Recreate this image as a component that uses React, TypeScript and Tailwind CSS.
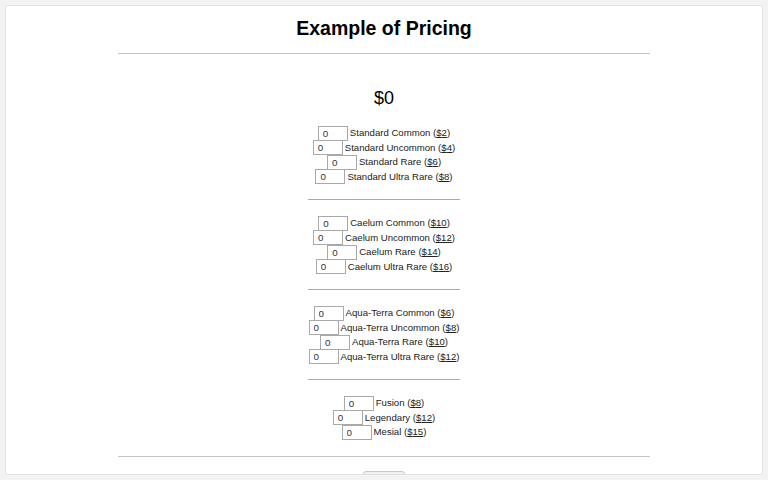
import React from "react";

type Item = { name: string; price: number };

const sections: Item[][] = [
  [
    { name: "Standard Common", price: 2 },
    { name: "Standard Uncommon", price: 4 },
    { name: "Standard Rare", price: 6 },
    { name: "Standard Ultra Rare", price: 8 },
  ],
  [
    { name: "Caelum Common", price: 10 },
    { name: "Caelum Uncommon", price: 12 },
    { name: "Caelum Rare", price: 14 },
    { name: "Caelum Ultra Rare", price: 16 },
  ],
  [
    { name: "Aqua-Terra Common", price: 6 },
    { name: "Aqua-Terra Uncommon", price: 8 },
    { name: "Aqua-Terra Rare", price: 10 },
    { name: "Aqua-Terra Ultra Rare", price: 12 },
  ],
  [
    { name: "Fusion", price: 8 },
    { name: "Legendary", price: 12 },
    { name: "Mesial", price: 15 },
  ],
];

function Row({ item }: { item: Item }) {
  return (
    <div className="flex h-[14.5px] items-center justify-center gap-[2px]">
      <input
        defaultValue="0"
        className="box-border h-[15px] w-[30px] border border-[#a9a9a9] bg-white px-[4px] py-0 text-[9.8px] leading-[13px] text-[#333] outline-none"
      />
      <span className="text-[9.6px] leading-none text-[#222]">
        {item.name} (<span className="underline">${item.price}</span>)
      </span>
    </div>
  );
}

export default function App() {
  return (
    <div
      className="h-[480px] w-[768px] bg-[#f3f3f3] pt-[5px] pl-[5px]"
      style={{ fontFamily: '"Liberation Sans", Arial, sans-serif' }}
    >
      <div className="box-border flex h-[470px] w-[758px] flex-col items-center overflow-hidden border border-[#e2e2e2] bg-white">
        <h1 className="mt-[10px] h-[24px] text-[19.5px] font-bold leading-[24px] text-black">
          Example of Pricing
        </h1>
        <div className="mt-[13px] h-px w-[532px] shrink-0 bg-[#c4c4c4]" />
        <div className="mt-[33px] h-[22px] text-[18px] leading-[22px] text-black">$0</div>
        <div className="mt-[17px] flex w-full flex-col items-center">
          {sections.map((sec, i) => (
            <div key={i} className="flex w-full flex-col items-center">
              {sec.map((it) => (
                <Row key={it.name} item={it} />
              ))}
              {i < sections.length - 1 && (
                <div className="mt-[15px] mb-[16px] h-px w-[152px] bg-[#aaaaaa]" />
              )}
            </div>
          ))}
        </div>
        <div className="mt-[16px] h-px w-[532px] shrink-0 bg-[#c4c4c4]" />
        <button className="mt-[14px] h-[20px] w-[42px] shrink-0 rounded-[3px] border border-[#c8c8c8] bg-[#f0f0f0]" />
      </div>
    </div>
  );
}
